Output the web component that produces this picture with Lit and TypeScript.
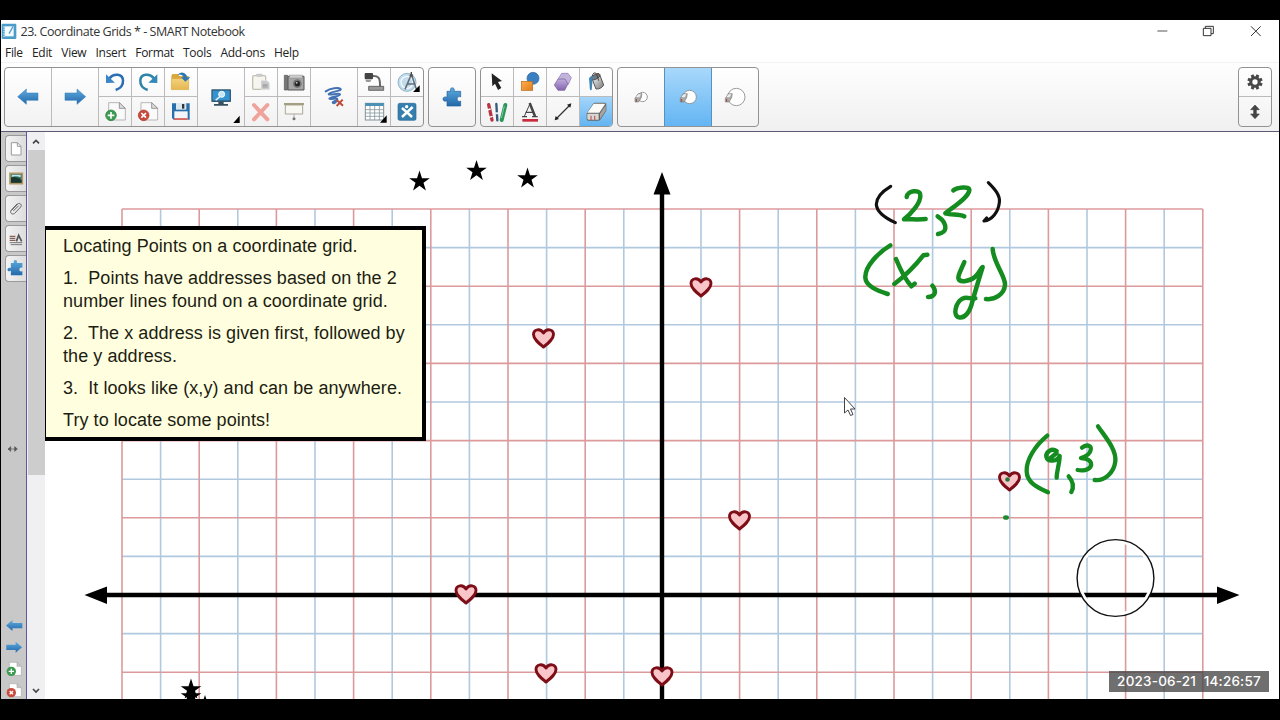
import { LitElement, html, svg, css } from "lit";
import { customElement } from "lit/decorators.js";

// Icons share one drawing scale: three units to a pixel.
const icon = (x: number, y: number, w: number, h: number, body: unknown) =>
  html`<svg class="icon" width=${w} height=${h} viewBox="${x} ${y} ${w * 3} ${h * 3}">${body}</svg>`;

const arrowLeft = svg`<path d="M53 290 L79 267 V279 H114 V301 H79 V313 Z" fill="url(#blue)" stroke="#2f79b8" stroke-width="1.5"/>`;
const arrowRight = svg`<path d="M257 290 L231 267 V279 H195 V301 H231 V313 Z" fill="url(#blue)" stroke="#2f79b8" stroke-width="1.5"/>`;

const defs = html`<svg class="defs" width="0" height="0"><defs>
  <linearGradient id="blue" x1="0" y1="0" x2="0" y2="1"><stop offset="0" stop-color="#5cacdf"/><stop offset="1" stop-color="#2468aa"/></linearGradient>
  <linearGradient id="gold" x1="0" y1="0" x2="0" y2="1"><stop offset="0" stop-color="#f3d27c"/><stop offset="1" stop-color="#e5b750"/></linearGradient>
  <linearGradient id="orange" x1="0" y1="0" x2="1" y2="1"><stop offset="0" stop-color="#ffad4c"/><stop offset="1" stop-color="#e07c1c"/></linearGradient>
  <linearGradient id="violet" x1="0" y1="0" x2="0" y2="1"><stop offset="0" stop-color="#c3addd"/><stop offset="1" stop-color="#8265b0"/></linearGradient>
  <linearGradient id="metal" x1="0" y1="0" x2="1" y2="1"><stop offset="0" stop-color="#ffffff"/><stop offset="1" stop-color="#777"/></linearGradient>
</defs></svg>`;

const undo = svg`<path d="M328 235 C342 218 368 222 369 241 C370 256 359 266 347 270" fill="none" stroke="#2d6fb6" stroke-width="7.500"/><path d="M318 223 L318 249 L345 248 Z" fill="#3c86c6"/>`;
const redo = svg`<path d="M462 235 C448 218 422 222 421 241 C420 256 431 266 443 270" fill="none" stroke="#2d83a8" stroke-width="7.500"/><path d="M472 223 L472 249 L445 248 Z" fill="#3389b5"/>`;
const open = svg`<path d="M514 228 L517 222 H534 L538 228 H566 V268 H514 Z" fill="#d9a93f"/><path d="M514 236 H566 V269 H514 Z" fill="url(#gold)" stroke="#cfa446"/><path d="M532 225 Q548 210 560 226 V232 H571 L556 245 L543 232 H551 Q547 220 532 225Z" fill="#2d77b5"/>`;
const page = (x: number, y: number) => svg`<path d="M${x} ${y} h32 l18 17 v35 h-50 z" fill="#fafafa" stroke="#aaa" stroke-width="2.5"/><path d="M${x + 32} ${y} v17 h18 z" fill="#ddd" stroke="#888" stroke-width="2.5"/>`;
const addPage = svg`${page(326, 308)}<circle cx="333" cy="346" r="16" fill="#3b9b4e" stroke="#26783a" stroke-width="2"/><path d="M323 346 H343 M333 336 V356" stroke="#fff" stroke-width="5"/>`;
const delPage = svg`${page(423, 308)}<circle cx="431" cy="346" r="16" fill="#c94a3c" stroke="#a73529" stroke-width="2"/><path d="M424 339 L438 353 M438 339 L424 353" stroke="#fff" stroke-width="5"/>`;
const save = svg`<path d="M516 310 H569 V359 H521 L516 354 Z" fill="#286fac"/><rect x="528" y="309" width="31" height="20" fill="#dce8f0"/><rect x="546" y="312" width="7" height="14" fill="#333"/><rect x="523" y="334" width="40" height="25" fill="#f3f6f8"/><path d="M522 357 H563" stroke="#d6483e" stroke-width="4"/>`;
const screen = svg`<rect x="634" y="268" width="59" height="38" rx="2" fill="#345c78"/><rect x="638" y="272" width="51" height="29" fill="#3593cf"/><path d="M655 305 h16 v7 h13 v5 h-42 v-5 h13 z" fill="#39505e"/><circle cx="665" cy="283" r="9" fill="#c3e6f8" stroke="#fff" stroke-width="3"/><path d="M659 290 L647 301" stroke="#fff" stroke-width="4"/><path d="M719 347 V369 H700 Z" fill="#000"/>`;
const paste = svg`<rect x="38" y="47" width="39" height="41" rx="4" fill="#f7f5ef" stroke="#c4bfb0" stroke-width="4"/><rect x="48" y="41" width="20" height="9" rx="4" fill="#c9c9c9"/><path d="M63 61 h17 l9 8 v20 h-26z" fill="#c8c8c8" stroke="#eee" stroke-width="2"/><rect x="68" y="72" width="15" height="11" fill="#aaa"/>`;
const capture = svg`<path d="M133 46 H143 V90 H133 Z" fill="#777" stroke="#555" stroke-width="2"/><path d="M144 49 H192 V90 H144 Z" fill="#a6a6a6" stroke="#555" stroke-width="3"/><rect x="148" y="45" width="39" height="9" fill="#ccc" stroke="#777"/><circle cx="172" cy="71" r="13" fill="#777"/><circle cx="172" cy="71" r="8" fill="#222"/><circle cx="170" cy="68" r="3" fill="#bbb"/>`;
const cross = svg`<path d="M42 135 L82 178 M82 135 L42 178" stroke="#efa39b" stroke-width="12" stroke-linecap="round"/>`;
const shade = svg`<path d="M136 135 H188 V162 H136 Z" fill="#f8f8f3" stroke="#aaa79a" stroke-width="3"/><path d="M132 132 H192" stroke="#a49e83" stroke-width="6"/><path d="M162 163 V174" stroke="#888" stroke-width="2"/><circle cx="162" cy="176" r="4.500" fill="#777"/>`;
const scribble = svg`<path d="M257 94 C271 84 296 82 302 87 C306 93 267 96 266 102 C266 108 300 97 300 104 C299 110 269 110 268 116 C269 121 293 111 292 118 C291 124 279 122 278 127 C279 132 287 129 288 125" stroke="#4272b3" stroke-width="6" fill="none" stroke-linecap="round"/><path d="M290 120 L309 137 M308 119 L290 138" stroke="#bd4b39" stroke-width="6"/>`;
const docCam = svg`<path d="M395 48 C415 46 421 53 420 80" fill="none" stroke="#666" stroke-width="6"/><rect x="374" y="39" width="25" height="19" rx="3" fill="#444"/><path d="M376 59 h18 l-3 7 h-12 z" fill="#999"/><path d="M386 79 H431 V91 H386Z" fill="#999" stroke="#555" stroke-width="2.500"/>`;
const compass = svg`<circle cx="501" cy="67" r="27" fill="#c2dcec" stroke="#91b4c8" stroke-width="3"/><circle cx="501" cy="67" r="18" fill="none" stroke="#f2faff" stroke-width="4"/><path d="M514 43 L495 88 M514 43 L530 90 M502 72 H524" stroke="#626c74" stroke-width="4.500"/><path d="M514 36 V44" stroke="#444" stroke-width="4"/><circle cx="514" cy="46" r="5" fill="#555"/><path d="M539 76 V96 H519 Z"/>`;
const table = svg`<rect x="376" y="130" width="55" height="50" fill="#fff" stroke="#829197" stroke-width="3"/><rect x="376" y="129" width="55" height="9" fill="#4a91b5"/><path d="M376 149 H431 M376 159 H431 M376 169 H431 M390 138 V180 M404 138 V180 M418 138 V180" stroke="#87989e" stroke-width="2.500"/><path d="M440 166 V188 H420 Z"/>`;
const exchange = svg`<rect x="474" y="130" width="54" height="51" rx="5" fill="#347fae" stroke="#286a96" stroke-width="2"/><path d="M486 144 L501 157 L518 141 M486 171 L501 157 L516 171" stroke="#fff" stroke-width="7.500" fill="none"/><circle cx="500" cy="140" r="5" fill="#fff"/>`;
const puzzle = svg`<path d="M621 94 H632 C626 80 648 80 642 94 H662 V111 C648 104 648 130 662 123 V138 H621 V122 C606 130 604 105 621 112 Z" fill="url(#blue)" stroke="#225f9d" stroke-width="2"/>`;
const pointer = svg`<path d="M65 40 L96 63 L84 66 L94 84 L84 90 L75 71 L67 79 Z" fill="#222"/>`;
const shapes = svg`<circle cx="189" cy="55" r="18" fill="#3a7fc2" stroke="#2c679f" stroke-width="2"/><rect x="154" y="64" width="34" height="27" fill="url(#orange)" stroke="#b46a1c" stroke-width="2"/>`;
const polygons = svg`<path d="M275 40 H294 L304 53 L295 73 H275 L264 57Z" fill="#c2b3da" stroke="#8e78b6" stroke-width="2"/><path d="M264 57 H285 L294 71 L284 91 H264 L253 75Z" fill="url(#violet)" stroke="#715999" stroke-width="2"/>`;
const bucket = svg`<path d="M366 56 L389 44 L401 75 Q393 88 378 87Z" fill="url(#metal)" stroke="#555" stroke-width="3"/><ellipse cx="377" cy="50" rx="14" ry="7" transform="rotate(-27 377 50)" fill="#777" stroke="#444" stroke-width="2.500"/><path d="M366 51 Q370 32 380 42 L386 62" fill="none" stroke="#444" stroke-width="3"/><path d="M357 55 Q361 46 374 49 Q366 55 367 68 L365 90 Q358 93 359 78 Z" fill="#4284b2"/>`;
const pens = svg`<path d="M56 134 L66 180" stroke="#b93442" stroke-width="10" stroke-linecap="round"/><path d="M51 150 L62 147 M56 172 l12 -3" stroke="#fff" stroke-width="4"/><path d="M79 132 L82 181" stroke="#345879" stroke-width="7" stroke-linecap="round"/><path d="M75 160 h12" stroke="#e7edf1" stroke-width="6"/><path d="M106 135 L95 180" stroke="#2b955b" stroke-width="12" stroke-linecap="round"/><path d="M103 138 L94 175" stroke="#7acb9b" stroke-width="3"/>`;
const textTool = svg`<path d="M163 169 L180 131" stroke="#444" stroke-width="3" fill="none"/><path d="M179 129 L195 169" stroke="#444" stroke-width="7.500"/><path d="M167 157 H189 M156 170 H171 M186 170 H203" stroke="#444" stroke-width="3.500"/><rect x="157" y="177" width="47" height="8" fill="#c92b3e"/>`;
const line = svg`<path d="M258 177 L300 135" stroke="#333" stroke-width="3.500"/><path d="M304 130 L301 143 L291 134Z M254 181 L257 168 L267 177Z" fill="#222"/>`;
const eraser = svg`<path d="M350 160 L369 131 Q371 128 376 128 H405 Q410 129 409 135 V152 L391 179 Q389 182 384 182 H355 Q350 182 350 177Z" fill="#666"/><path d="M352 158 L371 131 H406 L388 158Z" fill="#fbfbf8"/><path d="M352 161 H386 V179 H355 L352 176Z" fill="#d8d8d4"/><path d="M363 167 V180 M374 167 V180" stroke="#c5695f" stroke-width="4"/><path d="M390 161 L407 136 V152 L390 177Z" fill="#a5a5a2"/>`;
const smallEraser = (x: number, y: number) => svg`<path d="M${x} ${y + 12} l9 -14 h12 l-2 12 -8 13 h-11z" fill="#aaa" stroke="#666" stroke-width="1.500"/><path d="M${x + 3} ${y + 8} l7 -8 h8 l-5 9z" fill="#eee"/><path d="M${x + 4} ${y + 14} v8" stroke="#a53d36" stroke-width="3"/>`;
const er = (cx: number, cy: number, r: number, ex: number, ey: number) => svg`<circle cx=${cx} cy=${cy} r=${r} fill="#fff" stroke="#888" stroke-width="2.500"/>${smallEraser(ex, ey)}`;
const gear = svg`<g transform="translate(465 246)">${[0, 45, 90, 135].map((a) => svg`<rect x="-4.500" y="-23" width="9" height="46" transform="rotate(${a + 22.5})" fill="#484848"/>`)}<circle r="12.500" fill="none" stroke="#484848" stroke-width="9"/><circle r="8" fill="#fff"/></g>`;
const updown = svg`<path d="M465 315 L478 329 H469 V342 H478 L465 356 L452 342 H461 V329 H452Z" fill="#444" stroke="#444" stroke-width="2"/>`;

const ORIGIN = { x: 122, y: 209, step: 38.6 };

@customElement("app-root")
export class AppRoot extends LitElement {
  static styles = css`
    :host { display: block; width: 1280px; height: 720px; background: #000; overflow: hidden; color: #222; }
    * { box-sizing: border-box; }
    .icon { display: block; flex: none; }
    .defs { display: block; height: 0; }
    .screen { height: 720px; padding: 20px 1px 21px; display: flex; flex-direction: column; }
    .title { height: 22px; background: #fff; display: flex; align-items: center; font: 12.5px "Open Sans", sans-serif; color: #333; }
    .caption { margin-left: 3.5px; flex: 1; letter-spacing: -0.46px; white-space: pre; }
    .menu { height: 20px; background: #fff; display: flex; align-items: center; padding: 1px 0 0 4px; gap: 9.2px; font: 12px "Open Sans", sans-serif; letter-spacing: -0.3px; }
    .tools { height: 70px; padding: 4px 7px 5px 3px; display: flex; background: linear-gradient(#fefefe, #f0f0f0); border-top: 1px solid #f2f2f2; border-bottom: 1px solid #5c5a74; }
    .panel { height: 60px; display: flex; border: 1px solid #929292; border-radius: 4px; background: linear-gradient(#fff, #f2f2f2); overflow: hidden; margin-right: 4px; }
    .panel > * + * { border-left: 1px solid #bbb; }
    .panel.push { margin-left: auto; margin-right: 0; }
    .col { display: flex; flex-direction: column; }
    .col > * + * { border-top: 1px solid #bbb; }
    .on { background: linear-gradient(#a5d6fa, #62b4f1); }
    .panel .on.big { background: linear-gradient(#a9d8fb, #63b5f3); border-color: #5293c2; }
    .panel .on.big + * { border-color: #5293c2; }
    .body { flex: 1; min-height: 0; display: flex; }
    .side { width: 26px; background: #c8c8c8; border-right: 1px solid #5c59a0; display: flex; flex-direction: column; align-items: flex-end; padding-top: 3px; }
    .tab { width: 21px; height: 27px; margin-bottom: 3px; border: 1px solid #999; border-right: 0; border-radius: 4px 0 0 4px; background: linear-gradient(90deg, #f3f3f3, #ddd); display: flex; align-items: center; justify-content: center; flex: none; }
    .scroll { width: 18px; padding-left: 1px; background: #f0f0f2; display: flex; flex-direction: column; }
    .thumb { height: 325px; background: #cdcdcd; }
    .gap { flex: 1; }
    .canvas { position: relative; flex: 1; background: #fff; overflow: hidden; }
    .canvas > svg { display: block; }
    .note { position: absolute; left: 0; top: 94px; width: 381px; height: 215px; border: 4px solid #000; border-left-width: 1px; background: #ffffe0; padding: 4.5px 0 0 17px; font: 18px/23px "Liberation Sans", Arial, sans-serif; letter-spacing: 0.065px; color: #1d1d12; white-space: pre; }
    .note p { margin: 0 0 9.2px; }
    .stamp { position: absolute; left: 1064px; top: 539px; width: 160px; height: 21px; background: rgba(70, 70, 70, 0.78); color: #fff; font: 500 13.5px/21px Inter, sans-serif; letter-spacing: 0.2px; text-align: center; white-space: pre; }
  `;

  private heart(x: number, y: number) {
    return svg`<path transform="translate(${x} ${y - 0.5})" d="M0 9 C-5 5 -10 1 -10 -3.500 C-10 -9 -3 -10 0 -5 C3 -10 10 -9 10 -3.500 C10 1 5 5 0 9Z" fill="#f9c5c9" stroke="#7d0d16" stroke-width="2.900" stroke-linejoin="round"/>`;
  }

  private star(x: number, y: number) {
    return svg`<path transform="translate(${x} ${y})" d="M0 -11 L2.500 -3.300 H10.300 L4 1.300 L6.400 9 L0 4.300 L-6.400 9 L-4 1.300 L-10.300 -3.300 H-2.500Z"/>`;
  }

  private grid() {
    const { x, y, step } = ORIGIN;
    const tone = (i: number) => (i % 2 ? "#b0c9df" : "#dc9a9c");
    const rows = [...Array(13).keys()];
    const cols = [...Array(29).keys()];
    const h = (i: number) => svg`<path d="M${x} ${y + i * step} H${x + 28 * step}" stroke=${tone(i)} stroke-width="1.600"/>`;
    const v = (i: number) => svg`<path d="M${x + i * step} ${y} V700" stroke=${tone(i)} stroke-width="1.600"/>`;
    return svg`${rows.filter((i) => i % 2).map(h)}${cols.filter((i) => i % 2).map(v)}${rows.filter((i) => !(i % 2)).map(h)}${cols.filter((i) => !(i % 2)).map(v)}`;
  }

  private board() {
    return html`<svg width="1234" height="567" viewBox="45 132 1234 567">
      ${this.grid()}
      <path d="M662 190 V700 M104 595 H1220" stroke="#000" stroke-width="4.400"/>
      <path d="M662 172 L670.500 194.500 H653.500Z M84.500 595 L107 586.500 V604Z M1239.500 595 L1217 586.500 V604Z"/>
      ${[[419.5, 181.500], [476.500, 171], [527.500, 178.500], [191, 689.500], [191, 696.500], [205, 706]].map(([x, y]) => this.star(x, y))}
      ${[[701, 287.500], [543.500, 338.500], [739.500, 520.500], [466, 594.500], [546, 673.500], [662, 676.500], [1009.500, 481.500]].map(([x, y]) => this.heart(x, y))}
      <circle cx="1115.500" cy="578" r="36.500" fill="none" stroke="#fff" stroke-width="3"/>
      <circle cx="1115.500" cy="578" r="38.400" fill="none" stroke="#111" stroke-width="1.400"/>
      <circle cx="1007.500" cy="479.500" r="2.300" fill="#28773a"/>
      <ellipse cx="1006" cy="517.500" rx="3" ry="2.300" fill="#1a8b2e"/>
      <g transform="translate(840 160) scale(.33333)" fill="none" stroke-linecap="round" stroke-linejoin="round">
        <path stroke="#111" stroke-width="9.500" d="M152 79 C127 94 109 112 109 133 C110 157 136 174 166 188 M445 68 C463 86 482 106 478 128 C475 156 456 180 432 183 L440 174"/>
        <g stroke="#158c20" stroke-width="13.500">
          <path d="M200 111 C202 91 240 87 241 105 C243 130 211 163 192 178 C211 177 235 180 257 177"/>
          <path d="M293 169 C307 178 317 191 316 205 C315 216 304 220 294 222"/>
          <path d="M340 91 C351 83 389 77 388 91 C384 115 336 143 316 160 C334 166 354 161 373 169"/>
          <path d="M151 256 C117 276 74 319 76 353 C77 378 111 391 143 402"/>
          <path d="M168 297 C180 326 199 362 214 379 L224 371 M262 284 L250 286 C228 314 192 350 163 372"/>
          <path d="M277 377 C290 393 287 410 264 411"/>
          <path d="M373 306 C367 322 354 343 355 354 C358 371 394 362 406 350 C421 335 421 325 428 321 C419 350 406 393 397 425 C390 455 375 476 357 472 C337 467 347 428 367 416 C382 408 392 419 406 415"/>
          <path d="M458 267 C460 307 497 350 495 374 C493 404 464 420 438 417"/>
        </g>
      </g>
      <g transform="translate(980 410) scale(.33333)" fill="none" stroke="#158c20" stroke-width="13" stroke-linecap="round" stroke-linejoin="round">
        <path d="M202 77 C164 108 138 151 140 184 C141 219 174 233 204 247"/>
        <path d="M230 123 C215 113 197 126 199 140 C203 157 232 155 239 138 C239 158 230 185 230 203 M210 145 L230 129"/>
        <path d="M266 199 C282 217 281 233 274 246"/>
        <path d="M306 113 C319 102 336 106 332 120 C330 132 316 140 303 144 C321 145 338 152 332 169 C325 181 306 183 293 180"/>
        <path d="M354 49 C374 79 410 118 406 154 C402 190 372 214 344 210"/>
      </g>
      <path d="M844.500 397.500 V413 L848 410 L850.500 415.500 L853 414.500 L850.500 409 H855Z" fill="#fff" stroke="#444" stroke-width="1"/>
    </svg>`;
  }

  render() {
    return html`${defs}<div class="screen">
      <div class="title">
        ${icon(3, 68, 16, 17, svg`<rect x="5" y="70" width="44" height="46" rx="3" fill="#4b9cc8"/><path d="M14 78 H41 V108 H14Z" fill="#f3fbff"/><path d="M39 79 L27 100" stroke="#56a0c7" stroke-width="4"/><path d="M12 78 V110" stroke="#bde4f5" stroke-width="4" stroke-dasharray="4 3"/>`)}
        <span class="caption">23. Coordinate Grids * - SMART Notebook</span>
        ${icon(3450, 60, 129, 22, svg`<path d="M3472 93 H3502" stroke="#555" stroke-width="3"/><path d="M3610 85 H3633 V107 H3610Z M3616 85 V79 H3640 V101 H3633" fill="none" stroke="#333" stroke-width="3"/><path d="M3753 79 L3782 108 M3782 79 L3753 108" stroke="#333" stroke-width="3"/>`)}
      </div>
      <div class="menu">${["File", "Edit", "View", "Insert", "Format", "Tools", "Add-ons", "Help"].map((m) => html`<span>${m}</span>`)}</div>
      <div class="tools">
        <div class="panel">
          ${icon(15, 204, 46, 58, arrowLeft)}
          <div>${icon(156, 204, 46, 58, arrowRight)}</div>
          <div class="col">${icon(297, 204, 32, 28, undo)}<div>${icon(297, 291, 32, 29, addPage)}</div></div>
          <div class="col">${icon(396, 204, 32, 28, redo)}<div>${icon(396, 291, 32, 29, delPage)}</div></div>
          <div class="col">${icon(495, 204, 32, 28, open)}<div>${icon(495, 291, 32, 29, save)}</div></div>
          <div>${icon(594, 204, 46, 58, screen)}</div>
          <div class="col">${icon(15, 24, 32, 28, paste)}<div>${icon(15, 111, 32, 29, cross)}</div></div>
          <div class="col">${icon(114, 24, 32, 28, capture)}<div>${icon(114, 111, 32, 29, shade)}</div></div>
          <div>${icon(213, 24, 46, 58, scribble)}</div>
          <div class="col">${icon(354, 24, 32, 28, docCam)}<div>${icon(354, 111, 32, 29, table)}</div></div>
          <div class="col">${icon(453, 24, 32, 28, compass)}<div>${icon(453, 111, 32, 29, exchange)}</div></div>
        </div>
        <div class="panel">${icon(567, 24, 46, 58, puzzle)}</div>
        <div class="panel">
          <div class="col">${icon(33, 24, 32, 28, pointer)}<div>${icon(33, 111, 32, 29, pens)}</div></div>
          <div class="col">${icon(132, 24, 32, 28, shapes)}<div>${icon(132, 111, 32, 29, textTool)}</div></div>
          <div class="col">${icon(231, 24, 32, 28, polygons)}<div>${icon(231, 111, 32, 29, line)}</div></div>
          <div class="col">${icon(330, 24, 32, 28, bucket)}<div class="on">${icon(330, 111, 32, 29, eraser)}</div></div>
        </div>
        <div class="panel">
          ${icon(444, 24, 46, 58, er(518, 111, 14, 495, 103))}
          <div class="on big">${icon(585, 24, 46, 58, er(659, 111, 20, 631, 103))}</div>
          <div>${icon(726, 24, 46, 58, er(799, 111, 26, 766, 103))}</div>
        </div>
        <div class="panel push"><div class="col">${icon(417, 204, 32, 28, gear)}<div>${icon(417, 291, 32, 29, updown)}</div></div></div>
      </div>
      <div class="body">
        <div class="side">
          <div class="tab">${icon(20, 18, 20, 25, svg`<path d="M36 38 H54 L65 49 V75 H36Z" fill="#fff" stroke="#999" stroke-width="3"/><path d="M54 38 V49 H65" fill="none" stroke="#999" stroke-width="3"/>`)}</div>
          <div class="tab">${icon(20, 108, 20, 25, svg`<rect x="32" y="130" width="37" height="31" fill="#356f66" stroke="#b19762" stroke-width="5"/><path d="M35 143 Q48 137 67 151 V158 H35Z" fill="#19372f"/><path d="M37 134 H64 V142 Q50 136 37 141Z" fill="#bfe4e9"/>`)}</div>
          <div class="tab">${icon(20, 198, 20, 25, svg`<path d="M37 241 L55 222 C62 217 69 224 64 231 L46 250 C38 256 30 248 36 240 L54 221 M42 243 L58 227" fill="none" stroke="#666" stroke-width="3"/>`)}</div>
          <div class="tab">${icon(20, 288, 20, 25, svg`<path d="M31 319 H48 M31 325 H48 M31 331 H48" stroke="#865f55" stroke-width="4"/><path d="M51 334 L58 316 L67 334" fill="none" stroke="#555" stroke-width="5"/><path d="M31 338 H69 M34 344 H68" stroke="#777" stroke-width="3"/>`)}</div>
          <div class="tab">${icon(20, 378, 20, 25, svg`<g transform="translate(-487 320) scale(.84)"><path d="M621 94 H632 C626 80 648 80 642 94 H662 V111 C648 104 648 130 662 123 V138 H621 V122 C606 130 604 105 621 112 Z" fill="url(#blue)"/></g>`)}</div>
          ${icon(3, -435, 25, 414, svg`
            <path d="M24 57 L32 50 V64Z M52 57 L44 50 V64Z M32 57 H44" fill="#555" stroke="#555" stroke-width="2"/>
            <g transform="translate(-21 378) scale(.74 .72)"><path d="M53 290 L79 267 V279 H119 V301 H79 V313 Z" fill="url(#blue)"/></g>
            <g transform="translate(-124 443) scale(.74 .72)"><path d="M257 290 L231 267 V279 H193 V301 H231 V313 Z" fill="url(#blue)"/></g>
            <g>${[[697, "#3b9b4e"], [761, "#c94a3c"]].map(([y, c]) => svg`<path transform="translate(0 ${y})" d="M28 0 H51 L64 12 V39 H28Z M51 0 V12 H64" fill="#fff" stroke="#aaa" stroke-width="2"/><circle cx="34" cy=${Number(y) + 27} r="14" fill=${c}/>`)}
            <path d="M26 724 H42 M34 716 V732 M29 783 L39 793 M39 783 L29 793" stroke="#fff" stroke-width="4"/></g>`)}
        </div>
        <div class="scroll">
          ${icon(84, 6, 17, 18, svg`<path d="M99 40 L108 31 L117 40" fill="none" stroke="#444" stroke-width="5"/>`)}
          <div class="thumb"></div><div class="gap"></div>
          ${icon(84, 756, 17, 17, svg`<path d="M99 777 L108 786 L117 777" fill="none" stroke="#444" stroke-width="5"/>`)}
        </div>
        <div class="canvas">
          ${this.board()}
          <div class="note"><p>Locating Points on a coordinate grid.</p><p>1.  Points have addresses based on the 2
number lines found on a coordinate grid.</p><p>2.  The x address is given first, followed by
the y address.</p><p>3.  It looks like (x,y) and can be anywhere.</p><p>Try to locate some points!</p></div>
          <div class="stamp">2023-06-21  14:26:57</div>
        </div>
      </div>
    </div>`;
  }
}
